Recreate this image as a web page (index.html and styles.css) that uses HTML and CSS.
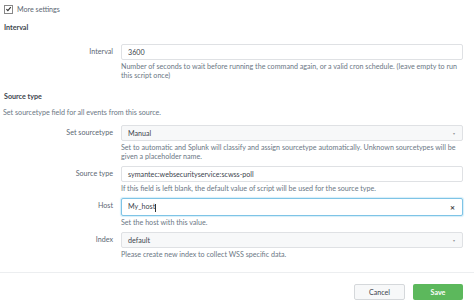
FILE: index.html
```html
<!DOCTYPE html>
<html lang="en">
<head>
  <meta charset="UTF-8" />
  <title>Input settings</title>
  <link rel="stylesheet" href="styles.css">
</head>
<body>
  <div class="more-settings">
    <span class="check">
      <svg width="8" height="8" viewBox="0 0 8 8"><path d="M1.6 4.2 L3.3 5.9 L6.6 1.8" fill="none" stroke="#333" stroke-width="1.3"/></svg>
    </span>
    <span>More settings</span>
  </div>

  <h3 class="section-title">Interval</h3>

  <div class="field-row first-row">
    <label class="field-label">Interval</label>
    <div class="field-body">
      <div class="text-input">3600</div>
      <div class="help">Number of seconds to wait before running the command again, or a valid cron schedule. (leave empty to run this script once)</div>
    </div>
  </div>

  <h3 class="section-title source-title">Source type</h3>
  <p class="section-desc">Set sourcetype field for all events from this source.</p>

  <div class="field-row desc-row">
    <label class="field-label">Set sourcetype</label>
    <div class="field-body">
      <div class="select-input"><span>Manual</span><span class="caret">▾</span></div>
      <div class="help">Set to automatic and Splunk will classify and assign sourcetype automatically. Unknown sourcetypes will be given a placeholder name.</div>
    </div>
  </div>

  <div class="field-row">
    <label class="field-label">Source type</label>
    <div class="field-body">
      <div class="text-input">symantec:websecurityservice:scwss-poll</div>
      <div class="help">If this field is left blank, the default value of script will be used for the source type.</div>
    </div>
  </div>

  <div class="field-row">
    <label class="field-label">Host</label>
    <div class="field-body">
      <div class="text-input focused"><span>My_host<span class="cursor"></span></span><span class="clear">✕</span></div>
      <div class="help">Set the host with this value.</div>
    </div>
  </div>

  <div class="field-row">
    <label class="field-label">Index</label>
    <div class="field-body">
      <div class="select-input"><span>default</span><span class="caret">▾</span></div>
      <div class="help">Please create new index to collect WSS specific data.</div>
    </div>
  </div>

  <div class="footer">
    <button class="btn btn-cancel">Cancel</button>
    <button class="btn btn-save">Save</button>
  </div>
</body>
</html>
```

FILE: styles.css
```css
body {
  font-family: "Lato", "Open Sans", sans-serif;
  font-size: 7.15px;
  color: #5c6773;
  background: #fff;
  margin: 0;
  padding: 5px 0 0 0;
}

.more-settings {
  display: flex;
  align-items: center;
  gap: 4px;
  padding-left: 4px;
  height: 8px;
  color: #5c6773;
}

.check {
  width: 7px;
  height: 7px;
  border: 0.5px solid #888;
  display: flex;
  align-items: center;
  justify-content: center;
  background: #fff;
}

.section-title {
  font-size: 7.15px;
  font-weight: 700;
  color: #3c444d;
  margin: 11px 0 0 4px;
  line-height: 8px;
}

.source-title {
  margin-top: 13px;
}

.section-desc {
  margin: 8px 0 0 3px;
  line-height: 8px;
  color: #6b7785;
}

.field-row {
  display: flex;
  margin-top: 5px;
}

.field-row.first-row {
  margin-top: 12px;
}

.field-row.desc-row {
  margin-top: 8px;
}

.field-label {
  width: 113px;
  text-align: right;
  line-height: 16px;
  padding-right: 8px;
  flex-shrink: 0;
  color: #5c6773;
}

.field-body {
  width: 342px;
}

.text-input, .select-input {
  height: 16px;
  box-sizing: border-box;
  border: 1px solid #dfe1e4;
  border-radius: 2px;
  padding: 0 7px 0 6px;
  display: flex;
  align-items: center;
  justify-content: space-between;
  color: #3c444d;
}

.text-input {
  background: #fff;
}

.select-input {
  background: #f7f8f9;
}

.text-input.focused {
  height: 18px;
  border-color: #7ec4e6;
  box-shadow: 0 0 1px 1px #d6eef9;
}

.cursor {
  display: inline-block;
  width: 0.6px;
  height: 8px;
  background: #333;
  vertical-align: middle;
}

.clear {
  font-size: 6px;
  font-weight: 700;
  color: #444;
}

.caret {
  font-size: 4px;
  color: #999;
}

.help {
  line-height: 9px;
  margin-top: 2px;
  color: #6b7785;
}

.footer {
  margin-top: 13px;
  border-top: 1px solid #eceef0;
  display: flex;
  justify-content: flex-end;
  gap: 8px;
  padding: 11px 11px 0 0;
}

.btn {
  height: 16px;
  font-family: inherit;
  font-size: 7.15px;
  border-radius: 2px;
  padding: 0;
}

.btn-cancel {
  width: 51px;
  background: #f7f8f9;
  border: 1px solid #d5d8db;
  color: #3c444d;
}

.btn-save {
  width: 50px;
  background: #5cb85c;
  border: none;
  color: #fff;
  font-weight: 700;
}
```
